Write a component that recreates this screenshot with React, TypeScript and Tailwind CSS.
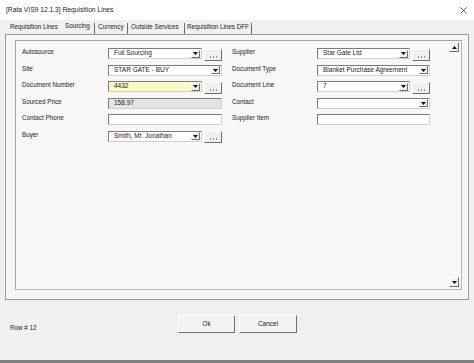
import React from "react";

const sunken =
  "border border-t-[#7c7c7c] border-l-[#7c7c7c] border-b-[#cfcfcf] border-r-[#cfcfcf]";
const raised =
  "border border-t-[#ffffff] border-l-[#ffffff] border-b-[#6e6e6e] border-r-[#6e6e6e]";

function DropBtn() {
  return (
    <div className={`ml-auto mr-[1px] flex h-[8px] w-[9px] shrink-0 items-center justify-center bg-[#f0f0f0] ${raised}`}>
      <svg width="5" height="3" viewBox="0 0 5 3">
        <path d="M0 0 H5 L2.5 3 Z" fill="#111" />
      </svg>
    </div>
  );
}

function DotsBtn() {
  return (
    <div className={`flex h-[12px] w-[18px] shrink-0 items-end justify-center bg-[#f0f0f0] pb-[2px] ${raised}`}>
      <svg width="7" height="2" viewBox="0 0 7 2">
        <rect x="0" y="0.5" width="1" height="1" fill="#333" />
        <rect x="3" y="0.5" width="1" height="1" fill="#333" />
        <rect x="6" y="0.5" width="1" height="1" fill="#333" />
      </svg>
    </div>
  );
}

function Box({
  value,
  bg = "bg-white",
  drop = false,
  w,
}: {
  value?: string;
  bg?: string;
  drop?: boolean;
  w: string;
}) {
  return (
    <div className={`flex h-[11px] items-center ${w} ${bg} ${sunken} pl-[5px] text-[6.5px] leading-none text-[#1a1a1a]`}>
      <span className="whitespace-nowrap">{value}</span>
      {drop && <DropBtn />}
    </div>
  );
}

function Field({
  kind,
  value,
  bg,
  side,
}: {
  kind: "combo+" | "combo" | "text";
  value?: string;
  bg?: string;
  side: "l" | "r";
}) {
  const full = side === "l" ? "w-[114px]" : "w-[113px]";
  const part = side === "l" ? "w-[94px]" : "w-[93px]";
  if (kind === "combo+") {
    return (
      <div className={`flex ${full} items-start gap-[2px]`}>
        <Box value={value} bg={bg} drop w={part} />
        <div className="mt-[0.5px]">
          <DotsBtn />
        </div>
      </div>
    );
  }
  if (kind === "combo") return <Box value={value} bg={bg} drop w={full} />;
  return <Box value={value} bg={bg} w={full} />;
}

function Label({ text, w }: { text: string; w: string }) {
  return (
    <div className={`${w} shrink-0 -mt-[1px] whitespace-nowrap text-[6.3px] leading-[10px] text-[#222]`}>
      {text}
    </div>
  );
}

type RowSpec = {
  l: string;
  lk: "combo+" | "combo" | "text";
  lv?: string;
  lbg?: string;
  r?: string;
  rk?: "combo+" | "combo" | "text";
  rv?: string;
};

const rows: RowSpec[] = [
  { l: "Autosource", lk: "combo+", lv: "Full Sourcing", r: "Supplier", rk: "combo+", rv: "Star Gate Ltd" },
  { l: "Site", lk: "combo", lv: "STAR GATE - BUY", r: "Document Type", rk: "combo", rv: "Blanket Purchase Agreement" },
  { l: "Document Number", lk: "combo+", lv: "4432", lbg: "bg-[#fdf9c2]", r: "Document Line", rk: "combo+", rv: "7" },
  { l: "Sourced Price", lk: "text", lv: "158.97", lbg: "bg-[#e4e4e4]", r: "Contact", rk: "combo", rv: "" },
  { l: "Contact Phone", lk: "text", lv: "", r: "Supplier Item", rk: "text", rv: "" },
  { l: "Buyer", lk: "combo+", lv: "Smith, Mr. Jonathan" },
];

function ScrollArrow({ up }: { up: boolean }) {
  return (
    <div className={`flex h-[10px] w-[10px] items-center justify-center bg-[#f0f0f0] ${raised}`}>
      <svg width="5" height="3" viewBox="0 0 5 3">
        {up ? <path d="M0 3 H5 L2.5 0 Z" fill="#111" /> : <path d="M0 0 H5 L2.5 3 Z" fill="#111" />}
      </svg>
    </div>
  );
}

export default function App() {
  return (
    <div className="flex h-[363px] w-[474px] flex-col overflow-hidden bg-[#f0f0f0] font-['Liberation_Sans',Arial,sans-serif]">
      {/* title bar */}
      <div className="flex h-[20px] shrink-0 items-center justify-between bg-white pl-[6px] pr-[7px]">
        <span className="text-[6.7px] leading-none text-[#222]">[Rata VIS9 12.1.3] Requisition Lines</span>
        <svg width="7" height="7" viewBox="0 0 7 7">
          <path d="M0.5 0.5 L6.5 6.5 M6.5 0.5 L0.5 6.5" stroke="#444" strokeWidth="0.9" />
        </svg>
      </div>

      {/* tabs */}
      <div className="flex h-[14px] shrink-0 items-end pl-[10px] text-[6.3px] leading-none text-[#222]">
        <div className="w-[55px] pb-[4px]">Requisition Lines</div>
        <div className="w-[29px] pb-[5px]">Sourcing</div>
        <div className="h-[11px] w-[1px] bg-[#6a6a6a]" />
        <div className="w-[32px] pb-[4px] pl-[3px]">Currency</div>
        <div className="h-[11px] w-[1px] bg-[#6a6a6a]" />
        <div className="w-[56px] pb-[4px] pl-[3px]">Outside Services</div>
        <div className="h-[11px] w-[1px] bg-[#6a6a6a]" />
        <div className="w-[66px] pb-[4px] pl-[2px]">Requisition Lines DFF</div>
        <div className="h-[11px] w-[1px] bg-[#6a6a6a]" />
      </div>

      {/* tab panel */}
      <div className="mx-[5px] flex h-[266px] shrink-0 border border-[#9a9a9a] bg-[#f6f6f6] pb-[9px] pl-[9px] pr-[6px] pt-[5px]">
        <div className="flex flex-1 border border-t-[#a6a6a6] border-l-[#a6a6a6] border-b-[#b8b8b8] border-r-[#b8b8b8] bg-[#f7f7f7]">
          <div className="flex flex-1 flex-col gap-[5.6px] pl-[6px] pt-[7px]">
            {rows.map((r) => (
              <div key={r.l} className="flex h-[11px] items-start">
                <Label text={r.l} w="w-[86px]" />
                <Field kind={r.lk} value={r.lv} bg={r.lbg} side="l" />
                <div className="w-[10px] shrink-0" />
                {r.r && (
                  <>
                    <Label text={r.r} w="w-[85px]" />
                    <Field kind={r.rk!} value={r.rv} side="r" />
                  </>
                )}
              </div>
            ))}
          </div>
          <div className="flex flex-col justify-between pb-[2px] pr-[2px] pt-[1px]">
            <ScrollArrow up />
            <ScrollArrow up={false} />
          </div>
        </div>
      </div>

      {/* bottom */}
      <div className="flex h-[60px] shrink-0 items-start pl-[10px]">
        <div className="w-[168px] pt-[25px] text-[6.3px] leading-none text-[#222]">Row # 12</div>
        <div className="flex gap-[4px] pt-[15px]">
          <div className={`flex h-[18px] w-[57px] items-center justify-center bg-[#f3f3f3] text-[6.5px] leading-none text-[#222] ${raised}`}>
            Ok
          </div>
          <div className={`flex h-[18px] w-[58px] items-center justify-center bg-[#f3f3f3] text-[6.5px] leading-none text-[#222] ${raised}`}>
            Cancel
          </div>
        </div>
      </div>
      <div className="h-[3px] shrink-0 bg-[#7f7f7f]" />
    </div>
  );
}
